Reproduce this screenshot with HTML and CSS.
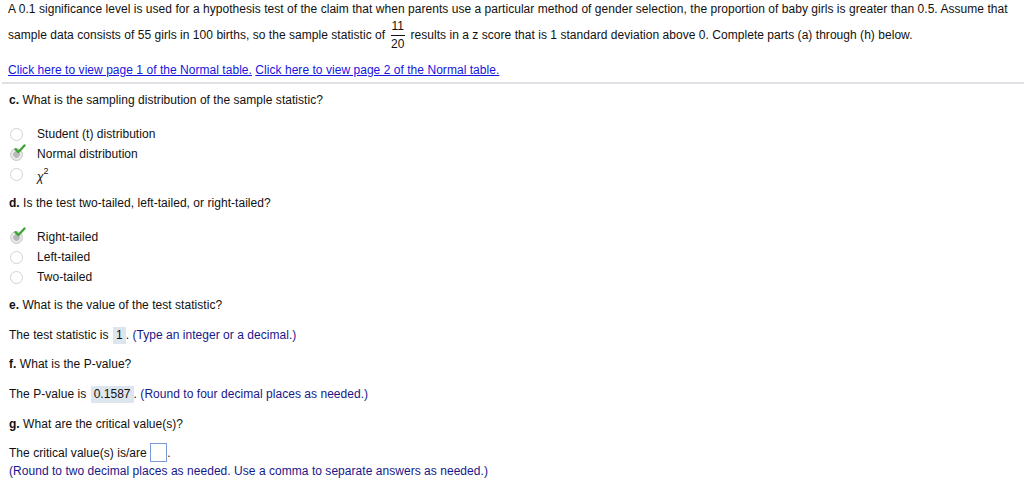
FILE: index.html
```html
<!DOCTYPE html>
<html>
<head>
<meta charset="utf-8">
<link rel="stylesheet" href="styles.css">
</head>
<body>
<div class="page">
  <div class="intro">
    <p class="l1">A 0.1 significance level is used for a hypothesis test of the claim that when parents use a particular method of gender selection, the proportion of baby girls is greater than 0.5. Assume that</p>
    <p class="l2">sample data consists of 55 girls in 100 births, so the sample statistic of <span class="frac"><span class="num">11</span><span class="den">20</span></span> results in a z score that is 1 standard deviation above 0. Complete parts (a) through (h) below.</p>
    <p class="links"><a href="#">Click here to view page 1 of the Normal table.</a> <a href="#">Click here to view page 2 of the Normal table.</a></p>
  </div>
  <div class="sep"></div>
  <div class="body">
    <p class="q first"><b>c.</b> What is the sampling distribution of the sample statistic?</p>
    <ul class="opts">
      <li><span class="radio"></span>Student (t) distribution</li>
      <li><span class="radio sel"><svg class="chk" viewBox="0 0 12 10" width="12" height="10"><path d="M1.5 5.2 L4.5 8 L10.5 1.5" fill="none" stroke="#3fa535" stroke-width="2.4" stroke-linecap="round" stroke-linejoin="round"/></svg></span>Normal distribution</li>
      <li><span class="radio"></span><span class="chi">χ<sup>2</sup></span></li>
    </ul>
    <p class="q after-opts"><b>d.</b> Is the test two-tailed, left-tailed, or right-tailed?</p>
    <ul class="opts">
      <li><span class="radio sel"><svg class="chk" viewBox="0 0 12 10" width="12" height="10"><path d="M1.5 5.2 L4.5 8 L10.5 1.5" fill="none" stroke="#3fa535" stroke-width="2.4" stroke-linecap="round" stroke-linejoin="round"/></svg></span>Right-tailed</li>
      <li><span class="radio"></span>Left-tailed</li>
      <li><span class="radio"></span>Two-tailed</li>
    </ul>
    <p class="q after-opts2"><b>e.</b> What is the value of the test statistic?</p>
    <p class="ans">The test statistic is <span class="box">1</span>. <span class="hint">(Type an integer or a decimal.)</span></p>
    <p class="q after-ans"><b>f.</b> What is the P-value?</p>
    <p class="ans">The P-value is <span class="box">0.1587</span>. <span class="hint">(Round to four decimal places as needed.)</span></p>
    <p class="q after-ans2"><b>g.</b> What are the critical value(s)?</p>
    <p class="ans crit">The critical value(s) is/are <span class="input"></span>.</p>
    <p class="hint line">(Round to two decimal places as needed. Use a comma to separate answers as needed.)</p>
  </div>
</div>
</body>
</html>
```

FILE: styles.css
```css
html, body {
  margin: 0;
  padding: 0;
  background: #fff;
}
body {
  font-family: "Liberation Sans", Arial, sans-serif;
  font-size: 12px;
  letter-spacing: 0.04px;
  color: #111;
}
p { margin: 0; }
.page {
  padding: 2px 0 0 0;
}
.intro {
  padding: 0 8px;
}
.l1 {
  line-height: 14px;
  white-space: nowrap;
}
.l2 {
  margin-top: 1px;
  white-space: nowrap;
  line-height: 36px;
}
.frac {
  display: inline-flex;
  flex-direction: column;
  align-items: center;
  vertical-align: middle;
  margin: 0 2px;
  line-height: 13px;
}
.num {
  border-bottom: 1px solid #111;
  padding: 0 1px 2px;
}
.den {
  padding-top: 2px;
}
.links {
  margin-top: 10px;
  line-height: 14px;
}
.links a {
  color: #1515e0;
  text-decoration: underline;
}
.sep {
  margin: 5px 0 0 2px;
  height: 2px;
  background: #e0e1e5;
}
.body {
  padding: 0 9px;
}
.q {
  margin-top: 9px;
  line-height: 14px;
}
.q b { font-weight: bold; }
.opts {
  list-style: none;
  margin: 17px 0 0 0;
  padding: 0;
}
.opts li {
  display: flex;
  align-items: center;
  height: 20px;
}
.radio {
  position: relative;
  box-sizing: border-box;
  width: 13px;
  height: 13px;
  border: 1px solid #d3d3d3;
  border-radius: 50%;
  background: #fff;
  margin: 0 14px 0 1px;
  flex: none;
}
.radio.sel {
  border-color: #c8c8c8;
  background: radial-gradient(circle, #b9b9b9 0 3px, #e8e8e8 3.5px);
}
.chk {
  position: absolute;
  left: 3px;
  top: -5px;
}
.chi {
  font-style: italic;
  position: relative;
  top: 2px;
}
.chi sup {
  font-style: normal;
  font-size: 9px;
  position: relative;
  top: -2px;
}
.q.after-opts { margin-top: 12px; }
.q.after-opts2 { margin-top: 11px; }
.ans {
  margin-top: 14px;
  line-height: 18px;
  display: flex;
  align-items: center;
  white-space: pre;
}
.box {
  display: inline-block;
  background: #dde5ef;
  padding: 0 3px;
  line-height: 17px;
  margin-left: 1px;
}
.hint {
  color: #17178a;
}
.q.after-ans { margin-top: 13px; }
.q.after-ans2 { margin-top: 14px; }
.ans.crit { margin-top: 12px; }
.input {
  display: inline-block;
  box-sizing: border-box;
  width: 17px;
  height: 19px;
  border: 1px solid #7c99da;
  background: #fff;
}
.line {
  line-height: 14px;
  margin-top: 2px;
}
```
